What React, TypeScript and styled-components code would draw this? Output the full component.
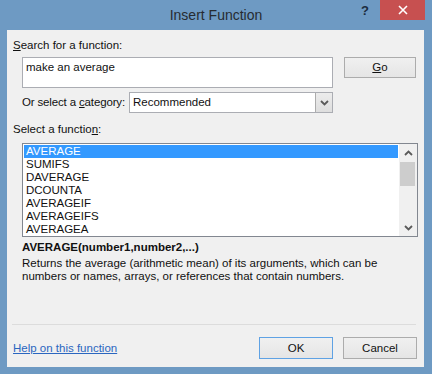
import React from "react";
import styled, { createGlobalStyle } from "styled-components";

const Global = createGlobalStyle`
  html, body { margin: 0; padding: 0; }
  body { font-family: "Segoe UI", "Liberation Sans", Arial, sans-serif; }
  * { box-sizing: border-box; }
`;

const Window = styled.div`
  width: 432px;
  height: 374px;
  background: #6e9ac3;
  display: flex;
  flex-direction: column;
`;

const TitleBar = styled.div`
  height: 30px;
  display: grid;
  grid-template-columns: 1fr auto 1fr;
  align-items: start;
`;

const Title = styled.div`
  grid-column: 2;
  font-size: 14px;
  line-height: 30px;
  color: #262b31;
`;

const Controls = styled.div`
  grid-column: 3;
  display: flex;
  justify-content: flex-end;
  align-items: flex-start;
  padding-right: 7px;
`;

const Help = styled.div`
  font-size: 13px;
  font-weight: bold;
  color: #1c2c3e;
  line-height: 22px;
  margin-right: 11px;
`;

const Close = styled.div`
  width: 45px;
  height: 20px;
  background: #c75050;
  display: flex;
  align-items: center;
  justify-content: center;
`;

const Panel = styled.div`
  flex: 1;
  margin: 0 8px 7px 7px;
  background: #f0f0f0;
  padding: 8px 6px 8px 6px;
  display: flex;
  flex-direction: column;
  font-size: 11.5px;
  color: #111;
`;

const Label = styled.div<{ $indent?: boolean; $top?: number }>`
  line-height: 15px;
  margin-left: ${(p) => (p.$indent ? 9 : 0)}px;
  margin-top: ${(p) => p.$top ?? 0}px;
`;

const Row = styled.div<{ $top: number }>`
  display: flex;
  align-items: flex-start;
  margin-left: 9px;
  margin-top: ${(p) => p.$top}px;
`;

const SearchBox = styled.div`
  width: 311px;
  height: 31px;
  border: 1px solid #abadb3;
  background: #fff;
  padding: 2px 3px;
  line-height: 15px;
`;

const Button = styled.div<{ $w: number; $h: number; $default?: boolean; $ml?: number }>`
  width: ${(p) => p.$w}px;
  height: ${(p) => p.$h}px;
  margin-left: ${(p) => p.$ml ?? 0}px;
  border: 1px solid ${(p) => (p.$default ? "#5fa2e4" : "#acacac")};
  background: linear-gradient(#f0f0f0, #e5e5e5);
  display: flex;
  align-items: center;
  justify-content: center;
  line-height: 15px;
`;

const CategoryLabel = styled.div`
  width: 107px;
  line-height: 21px;
  letter-spacing: -0.15px;
  white-space: nowrap;
`;

const Select = styled.div`
  width: 204px;
  height: 21px;
  border: 1px solid #abadb3;
  background: #fff;
  display: flex;
  align-items: stretch;
`;

const SelectText = styled.div`
  flex: 1;
  padding-left: 3px;
  line-height: 19px;
`;

const DropButton = styled.div`
  width: 17px;
  border-left: 1px solid #acacac;
  background: linear-gradient(#ececec, #dedede);
  display: flex;
  align-items: center;
  justify-content: center;
`;

const List = styled.div`
  margin-left: 9px;
  margin-top: 6px;
  width: 396px;
  height: 94px;
  border: 1px solid #828790;
  background: #fff;
  display: flex;
`;

const Items = styled.div`
  flex: 1;
  padding: 1px;
`;

const Item = styled.div<{ $selected?: boolean }>`
  height: 13px;
  line-height: 13px;
  padding-left: 2px;
  background: ${(p) => (p.$selected ? "#3399ff" : "transparent")};
  color: ${(p) => (p.$selected ? "#fff" : "#111")};
`;

const ScrollBar = styled.div`
  width: 18px;
  background: #f0f0f0;
  display: flex;
  flex-direction: column;
`;

const ScrollArrow = styled.div`
  height: 17px;
  display: flex;
  align-items: center;
  justify-content: center;
`;

const Thumb = styled.div`
  height: 24px;
  margin: 1px 2px 0 1px;
  background: #cdcdcd;
`;

const Fill = styled.div`
  flex: 1;
`;

const Signature = styled.div`
  margin: 3px 0 0 9px;
  font-weight: bold;
  line-height: 15px;
`;

const Description = styled.div`
  margin: 2px 0 0 9px;
  line-height: 13px;
`;

const Separator = styled.div`
  height: 1px;
  background: #dcdcdc;
  margin: auto 2px 0 -1px;
`;

const Footer = styled.div`
  display: flex;
  align-items: center;
  margin-top: 12px;
  padding-right: 1px;
`;

const HelpLink = styled.a`
  flex: 1;
  color: #2a66c0;
  text-decoration: underline;
  line-height: 15px;
  cursor: pointer;
`;

const Chevron = ({ up }: { up?: boolean }) => (
  <svg width="9" height="6" viewBox="0 0 9 6">
    <polyline
      points={up ? "1,5 4.5,1.5 8,5" : "1,1 4.5,4.5 8,1"}
      fill="none"
      stroke="#5a5a5a"
      strokeWidth="1.8"
    />
  </svg>
);

const items = ["AVERAGE", "SUMIFS", "DAVERAGE", "DCOUNTA", "AVERAGEIF", "AVERAGEIFS", "AVERAGEA"];

export default function App() {
  return (
    <>
      <Global />
      <Window>
        <TitleBar>
          <Title>Insert Function</Title>
          <Controls>
            <Help>?</Help>
            <Close>
              <svg width="10" height="10" viewBox="0 0 10 10">
                <path d="M1 1 L9 9 M9 1 L1 9" stroke="#fff" strokeWidth="1.6" />
              </svg>
            </Close>
          </Controls>
        </TitleBar>
        <Panel>
          <Label>
            <u>S</u>earch for a function:
          </Label>
          <Row $top={4}>
            <SearchBox>make an average</SearchBox>
            <Button $w={72} $h={21} $ml={11}>
              <span>
                <u>G</u>o
              </span>
            </Button>
          </Row>
          <Row $top={4}>
            <CategoryLabel>
              Or select a <u>c</u>ategory:
            </CategoryLabel>
            <Select>
              <SelectText>Recommended</SelectText>
              <DropButton>
                <Chevron />
              </DropButton>
            </Select>
          </Row>
          <Label $top={9}>
            Select a functio<u>n</u>:
          </Label>
          <List>
            <Items>
              {items.map((it, i) => (
                <Item key={it} $selected={i === 0}>
                  {it}
                </Item>
              ))}
            </Items>
            <ScrollBar>
              <ScrollArrow>
                <Chevron up />
              </ScrollArrow>
              <Thumb />
              <Fill />
              <ScrollArrow>
                <Chevron />
              </ScrollArrow>
            </ScrollBar>
          </List>
          <Signature>AVERAGE(number1,number2,...)</Signature>
          <Description>
            Returns the average (arithmetic mean) of its arguments, which can be
            <br />
            numbers or names, arrays, or references that contain numbers.
          </Description>
          <Separator />
          <Footer>
            <HelpLink>Help on this function</HelpLink>
            <Button $w={74} $h={22} $default>
              OK
            </Button>
            <Button $w={74} $h={22} $ml={10}>
              Cancel
            </Button>
          </Footer>
        </Panel>
      </Window>
    </>
  );
}
